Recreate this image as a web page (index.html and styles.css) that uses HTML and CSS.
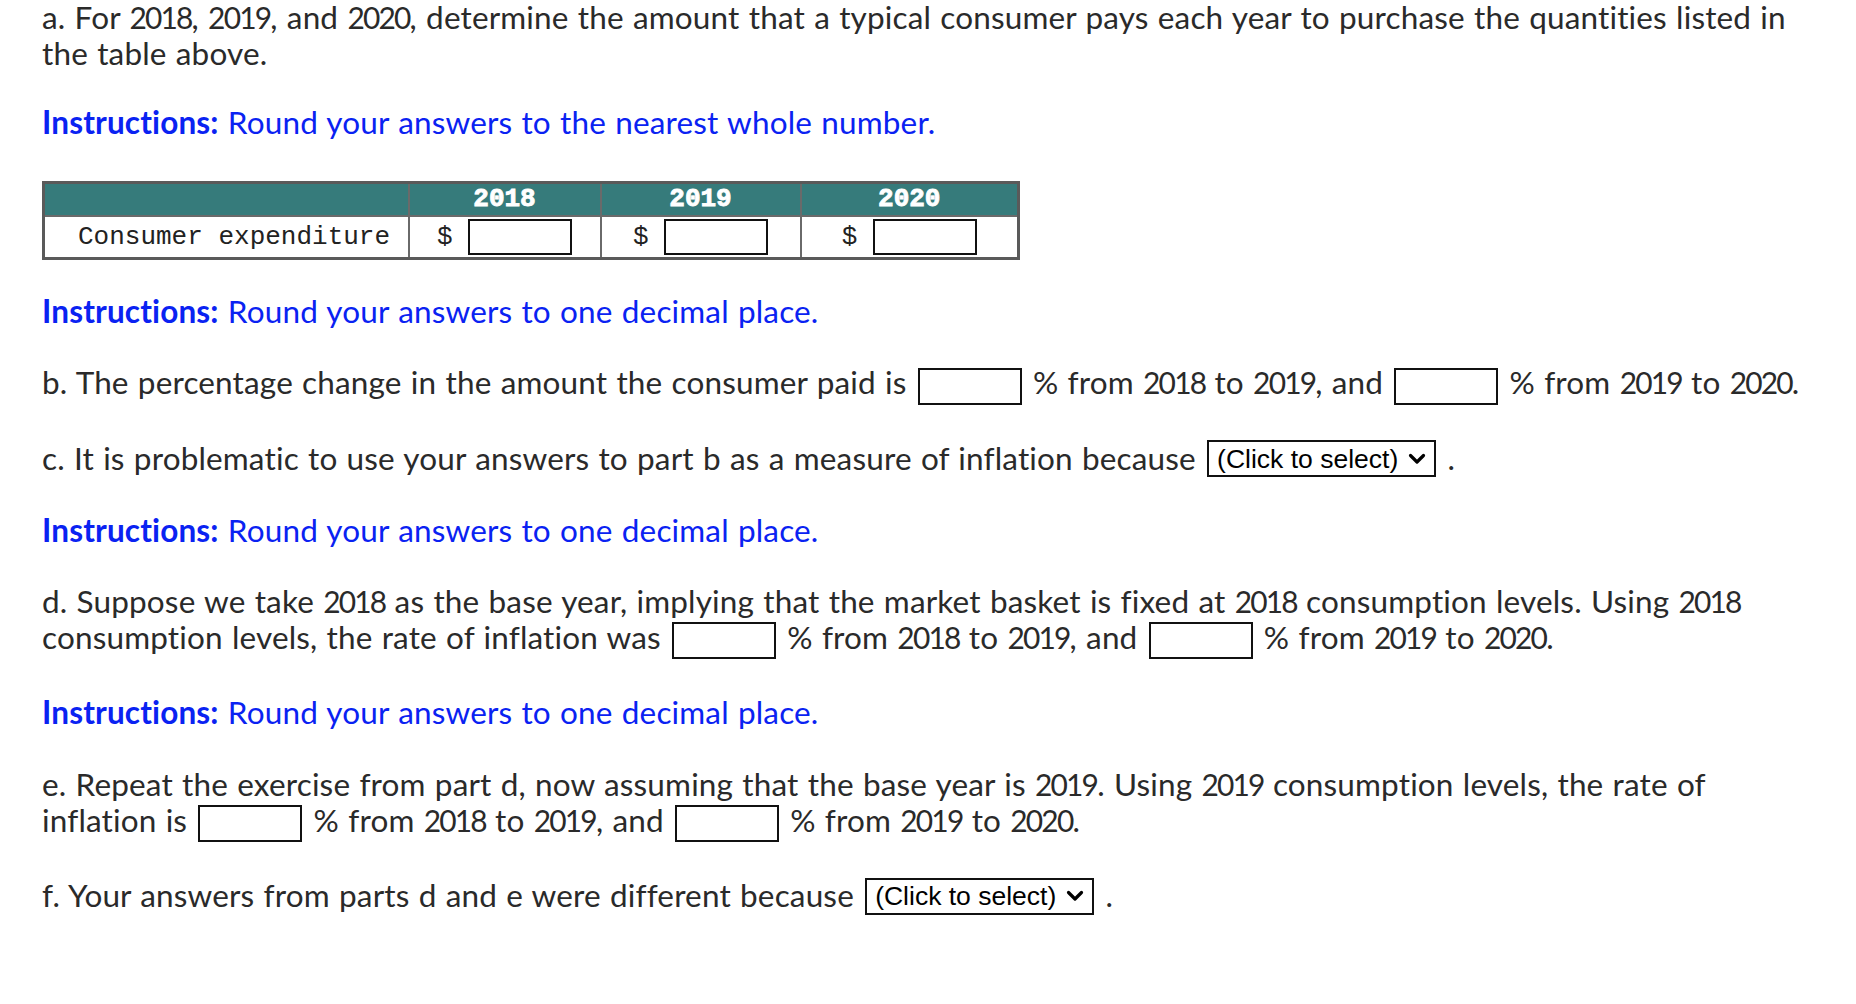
FILE: index.html
```html
<!DOCTYPE html>
<html lang="en">
<head>
<meta charset="utf-8">
<title>Consumer expenditure</title>
<link rel="stylesheet" href="styles.css">
</head>
<body>
<div class="page">
  <p class="q first">a. For <span class="yr">2018</span>, <span class="yr">2019</span>, and <span class="yr">2020</span>, determine the amount that a typical consumer pays each year to purchase the quantities listed in the table above.</p>
  <p class="instr"><b>Instructions:</b> Round your answers to the nearest whole number.</p>
  <table class="grid">
    <colgroup>
      <col class="w-label"><col class="w-y1"><col class="w-y2"><col class="w-y3">
    </colgroup>
    <thead>
      <tr><th></th><th>2018</th><th>2019</th><th>2020</th></tr>
    </thead>
    <tbody>
      <tr>
        <td class="label">Consumer expenditure</td>
        <td>$ <input class="tbox" type="text"></td>
        <td>$ <input class="tbox" type="text"></td>
        <td>$ <input class="tbox" type="text"></td>
      </tr>
    </tbody>
  </table>
  <p class="instr"><b>Instructions:</b> Round your answers to one decimal place.</p>
  <p class="q">b. The percentage change in the amount the consumer paid is <input class="box" type="text"> % from <span class="yr">2018</span> to <span class="yr">2019</span>, and <input class="box" type="text"> % from <span class="yr">2019</span> to <span class="yr">2020</span>.</p>
  <p class="q">c. It is problematic to use your answers to part b as a measure of inflation because <span class="pick"><span class="pick-text">(Click to select)</span><svg class="chev" viewBox="0 0 18 12" aria-hidden="true"><path d="M2.5 2.5 L9 9 L15.5 2.5" fill="none" stroke="#000" stroke-width="3.2" stroke-linecap="round" stroke-linejoin="round"/></svg></span> .</p>
  <p class="instr"><b>Instructions:</b> Round your answers to one decimal place.</p>
  <p class="q">d. Suppose we take <span class="yr">2018</span> as the base year, implying that the market basket is fixed at <span class="yr">2018</span> consumption levels. Using <span class="yr">2018</span> consumption levels, the rate of inflation was <input class="box" type="text"> % from <span class="yr">2018</span> to <span class="yr">2019</span>, and <input class="box" type="text"> % from <span class="yr">2019</span> to <span class="yr">2020</span>.</p>
  <p class="instr"><b>Instructions:</b> Round your answers to one decimal place.</p>
  <p class="q">e. Repeat the exercise from part d, now assuming that the base year is <span class="yr">2019</span>. Using <span class="yr">2019</span> consumption levels, the rate of inflation is <input class="box" type="text"> % from <span class="yr">2018</span> to <span class="yr">2019</span>, and <input class="box" type="text"> % from <span class="yr">2019</span> to <span class="yr">2020</span>.</p>
  <p class="q">f. Your answers from parts d and e were different because <span class="pick"><span class="pick-text">(Click to select)</span><svg class="chev" viewBox="0 0 18 12" aria-hidden="true"><path d="M2.5 2.5 L9 9 L15.5 2.5" fill="none" stroke="#000" stroke-width="3.2" stroke-linecap="round" stroke-linejoin="round"/></svg></span> .</p>
</div>
</body>
</html>
```

FILE: styles.css
```css
html, body {
  margin: 0;
  background: #ffffff;
}

body {
  font-family: Lato, "Open Sans", sans-serif;
  font-size: 31.5px;
  line-height: 35.5px;
  letter-spacing: 0.15px;
  word-spacing: 1px;
  color: #2a2a2a;
}

.page {
  padding: 0 40px 0 42px;
}

p {
  margin: 0 0 36.2px;
}

p.first {
  margin-bottom: 34px;
}

.yr {
  font-size: 0.95em;
  letter-spacing: -0.06em;
}

.instr {
  color: #0a22f2;
}

.instr b {
  font-weight: 700;
}

.box {
  box-sizing: border-box;
  width: 104px;
  height: 37px;
  margin: 0 2px;
  padding: 0;
  border: 2px solid #111;
  background: #fff;
  vertical-align: middle;
  font: inherit;
}

.pick {
  display: inline-flex;
  align-items: center;
  box-sizing: border-box;
  height: 37px;
  margin: -8px 2px -2px;
  padding: 0 8px;
  gap: 10px;
  border: 2px solid #111;
  vertical-align: middle;
  font-family: "Liberation Sans", Arial, sans-serif;
  font-size: 26.5px;
  line-height: 1;
  letter-spacing: normal;
  word-spacing: normal;
  color: #000;
}

.chev {
  width: 18px;
  height: 12px;
}

/* table */
.grid {
  border-collapse: collapse;
  table-layout: fixed;
  width: 975px;
  margin: 40px 0 34px;
  border: 3px solid #5a5a5a;
  letter-spacing: normal;
  word-spacing: normal;
}

.w-label { width: 365px; }
.w-y1 { width: 192px; }
.w-y2 { width: 200px; }
.w-y3 { width: 218px; }

.grid th {
  height: 31px;
  padding: 0;
  background: #367b7b;
  color: #fff;
  border: 2px solid #6a6a6a;
  font: bold 26px/1 "Liberation Mono", monospace;
  -webkit-text-stroke: 0.9px #fff;
  text-align: center;
}

.grid td {
  height: 40px;
  padding: 0;
  border: 2px solid #6a6a6a;
  font: 26px/1 "Liberation Mono", monospace;
  color: #222;
  text-align: center;
  white-space: nowrap;
}

.grid td.label {
  text-align: left;
  padding-left: 33px;
}

.tbox {
  box-sizing: border-box;
  width: 104px;
  height: 36px;
  margin: 0;
  padding: 0;
  border: 2px solid #111;
  background: #fff;
  vertical-align: middle;
}
```
